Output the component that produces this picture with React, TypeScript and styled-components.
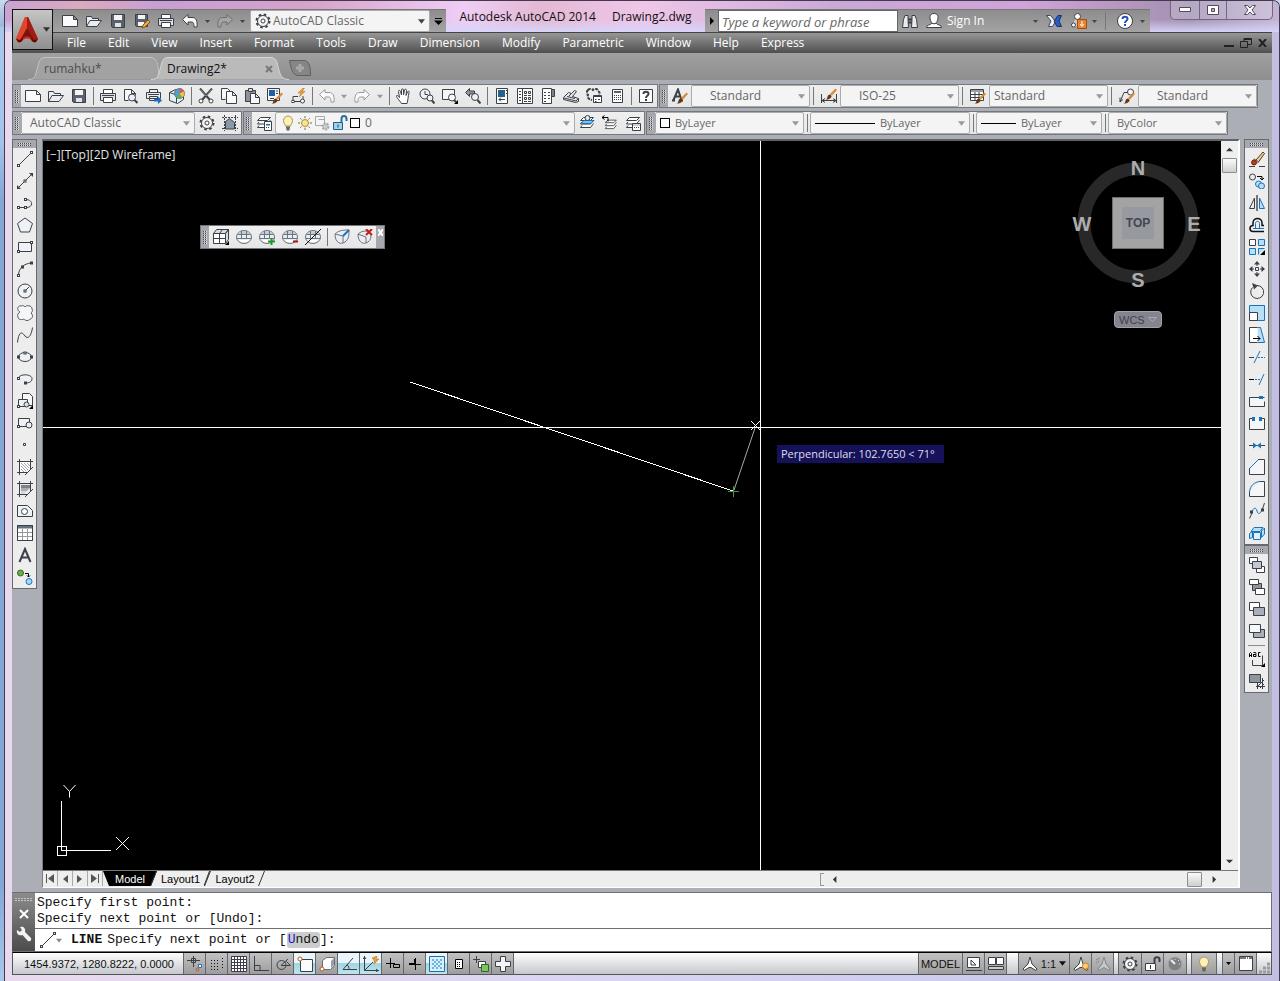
import React from 'react';
import styled, { createGlobalStyle } from 'styled-components';

const UI = '"Open Sans", "Noto Sans", sans-serif';
const INK = '#3b4048';
const BLUE = '#1a74bd';
const SKY = '#b9dff5';

const Global = createGlobalStyle`
  * { box-sizing: border-box; }
  body { margin: 0; font-family: ${UI}; font-size: 12px; line-height: 16px; color: #111; }
  button, input, select { font: inherit; color: inherit; margin: 0; padding: 0; border: 0; background: none; border-radius: 0; }
  a { color: inherit; text-decoration: none; }
`;

/* ---------- glyphs, drawn on a 16 x 16 grid ---------- */

const dot = (x: number, y: number) => <rect x={x - 1} y={y - 1} width="2" height="2" fill="#fff" />;
const brush = (
  <g stroke="none">
    <path d="M9 10l5.500-5.500 1.500 1.500-5 5.500z" fill="#d88a35" />
    <path d="M4.500 15.500c2 0 1.500-3 3-4.500s3 0 3 1.500-3 3.500-6 3z" fill="#6d3518" />
  </g>
);
const frameHash = <path d="M2.500 0v16M13.500 0v11M0 2.500h16M0 13.500h10M8 16l8-8" />;
const sphere = (
  <>
    <ellipse cx="8" cy="8" rx="7.500" ry="6.500" fill="#e9eef2" stroke="#6b737c" />
    <path d="M2 5h12c-1-2-3-3-6-3S3 3 2 5z" fill="#c3ccd4" stroke="none" />
    <path d="M1.500 5.500h13M.5 9.500h15" stroke="#6b737c" />
    <path d="M5.500 2v7M10.500 2v7" stroke="#6b737c" />
    <path d="M3 11c2 3 8 3 10 0z" fill="#fff" stroke="none" />
  </>
);
const layers = (
  <path d="M4.500 2.500h10l-3 3h-10zM3 7l-1.500 2h10l3-4M3 10.500l-1.500 2h10l3-4" fill="#fff" />
);

const glyphs: Record<string, React.ReactNode> = {
  new: <path d="M.5 2.500h11l4 4v7h-15zM11.500 2.500v4h4" fill="#fafafa" />,
  open: <path d="M.5 13.500v-10h5l1 2h6v2.500M.5 13.500l3.500-6h11.500l-4.500 6z" fill="#e9edf1" />,
  save: (
    <>
      <path d="M1.500 1.500h13v13h-12l-1-1z" fill="#5b626c" />
      <path d="M4 2h8v5H4z" fill="#f4f4f4" stroke="none" />
      <path d="M5 10h6v4H5z" fill="#dfe3e7" stroke="none" />
    </>
  ),
  saveas: (
    <>
      <path d="M1.500 1.500h12v12h-11l-1-1z" fill="#5b626c" />
      <path d="M4 2h7v4H4zM4 9h6v4H4z" fill="#f4f4f4" stroke="none" />
      <path d="M8 15l1-3 5-5 2 2-5 5z" fill="#f0a83a" stroke="#8a5a1b" />
    </>
  ),
  print: (
    <>
      <path d="M3.500 6V1.500h9V6" fill="#fff" />
      <path d="M.5 5.500h15v7H.5z" fill="#dcdfe3" />
      <path d="M3.500 9.500h9v5h-9z" fill="#fff" />
      <path d="M2 7.500h12" />
    </>
  ),
  preview: (
    <>
      <path d="M1.500 12.500v-11h7l4 4v2M1.500 12.500h4M8.500 1.500v4h4" fill="#fafafa" />
      <circle cx="9" cy="9.500" r="3.500" fill="#e8f0f6" />
      <path d="M11.500 12l3 3" strokeWidth="2" />
    </>
  ),
  publish: (
    <>
      <path d="M3.500 5V1.500h8V5M.5 4.500h14v6H.5zM3.500 8.500h8v4h-8z" fill="#eceef0" />
      <path d="M2 6.500h11" />
      <path d="M8 11h4V8.500l4 4-4 3.500v-2.500H8z" fill="#1b6fc0" stroke="none" />
    </>
  ),
  globe: (
    <>
      <path d="M.5 4.500l6-3 8 2v8l-6 4-8-3z" fill="#e4eef5" />
      <path d="M.5 4.500l7 2.500v8" />
      <circle cx="10.500" cy="5.500" r="5" fill="#4d9fd6" stroke="#6b7279" />
      <path d="M10.500 5.500v-5a5 5 0 014.500 3z" fill="#e2574c" stroke="none" />
      <path d="M10.500 5.500l4.500-2a5 5 0 01-2 6z" fill="#f0c23a" stroke="none" />
      <path d="M10.500 5.500l2.500 4.500a5 5 0 01-6-1z" fill="#5fae52" stroke="none" />
    </>
  ),
  cut: (
    <>
      <path d="M2 .5L12 12M14 .5L4 12" strokeWidth="2" />
      <path d="M2.500 1.500L8 8M13.500 1.500L8 8" stroke="#c9cdd2" strokeWidth=".5" />
      <circle cx="3" cy="13" r="2" fill="#fff" />
      <circle cx="13" cy="13" r="2" fill="#fff" />
    </>
  ),
  copy: <path d="M.5 11.500V.5h6l3 3M.5 11.500h4M5.500 3.500h6l4 4v8h-10zM11.500 3.500v4h4" fill="#fafafa" />,
  paste: (
    <>
      <path d="M1.500 2.500h10v11h-10z" fill="#8d939a" />
      <path d="M4.500.5h4v3h-4z" fill="#ddd" />
      <path d="M6.500 5.500h5l4 4v6h-9zM11.500 5.500v4h4" fill="#fafafa" />
    </>
  ),
  match: (
    <>
      <path d="M.5.5h12v12H.5z" fill="#f4f4f4" />
      <path d="M2 2h6v6H2z" fill="#1d62a8" stroke="none" />
      <path d="M9 3h2M9 5.500h2M3 10.500h4" />
      {brush}
    </>
  ),
  blockedit: (
    <>
      <path d="M3 13.500V8.500h5M3 13.500h8M13 12V8" />
      {dot(3, 13.500)}
      <circle cx="12.500" cy="13" r="2" fill="#fff" />
      <path d="M13 0l-5 5h3l-2 4 6-5.500h-3l2.500-3.500z" fill="#f0a030" stroke="#b66a15" strokeWidth=".5" />
    </>
  ),
  undo: <path d="M.5 6.500L6 1.500v3h4c4 0 5.500 3 5 9.500h-3c0-4-.5-5-3-5H6v3z" fill="#fbfbfb" />,
  redo: <path d="M15.500 6.500L10 1.500v3H6c-4 0-5.500 3-5 9.500h3c0-4 .5-5 3-5h3v3z" fill="#fbfbfb" />,
  hand: (
    <path
      d="M5.500 15.500C4 13 1 10 .5 8.500s1.500-1.500 3 1l-1-6c0-1.500 1.500-1.500 2 0l1 3.500V2c0-1.500 2-1.500 2 0v5l1-5c.5-1.500 2-1 2 .5l-.5 5 1.500-3.500c.5-1.500 2-1 1.500.5-1 4-1 8-2 11z"
      fill="#fff"
    />
  ),
  zoomrt: (
    <>
      <circle cx="6" cy="6" r="5" fill="#eef2f5" />
      <path d="M6 3v3.500h3" />
      <circle cx="11" cy="10" r="3" fill="#eef2f5" />
      <path d="M13 12.500l2.500 3" strokeWidth="2" />
    </>
  ),
  zoomwin: (
    <>
      <path d="M.5 1.500h12v10H.5z" fill="#f3f5f6" />
      <circle cx="10" cy="9.500" r="3.500" fill="#f4f7f9" />
      <path d="M12 12l2 2" strokeWidth="2" />
      <path d="M16 12v4h-4z" fill="#000" stroke="none" />
    </>
  ),
  zoomprev: (
    <>
      <path d="M.5 4.500l4-4v2.500h5v3h-5v2.500z" fill="#8d939a" />
      <circle cx="10" cy="9" r="3.500" fill="#eef2f5" />
      <path d="M12.500 12l3 3.500" strokeWidth="2" />
    </>
  ),
  props: (
    <>
      <path d="M2.500.5h11v15h-11z" fill="#fff" />
      <path d="M4 2h7v7H4z" fill="#27618f" stroke="none" />
      <path d="M12 2.500h1M12 5.500h1M5 11.500h6M7 9.500l-2 2 2 2" />
    </>
  ),
  center: (
    <>
      <path d="M.5.5h15v15H.5zM5.500.5v15" fill="#fff" />
      <path d="M2 3.500h2M2 6.500h2M2 9.500h2M2 12.500h2" />
      <path d="M7.500 3.500h2v2h-2zM11.500 3.500h2v2h-2zM7.500 9.500h2v2h-2zM11.500 9.500h2v2h-2z" />
      <path d="M7 7.500h3M11 7.500h3M7 13.500h3M11 13.500h3" />
    </>
  ),
  palettes: (
    <>
      <path d="M2.500.5h9v15h-9z" fill="#fff" />
      <path d="M11.500 1.500h3v7h-3z" fill="#7b828a" />
      <path d="M4 4.500h2M8 4.500h2M4 7.500h2M8 7.500h2M4 10.500h2M8 10.500h2M4 13.500h2" />
    </>
  ),
  sheet: (
    <>
      <path d="M.5 9.500l5-5 3 1 3-3 2 1-4 5 6 2v3l-3 1-12-3z" fill="#e2e6ea" />
      <path d="M1 10l12 3 2.500-2.500M4 8.500l8 2M8.500 5.500l-3 3" />
    </>
  ),
  markup: (
    <>
      <path d="M2 2c2-2 4-1 5 0 2-2 5-1 5 1 2 1 2 3 1 4M2 2C0 4 1 6 2 7c-1 2 0 4 4 5" strokeDasharray="3 1" strokeWidth="2" />
      <path d="M7.500 7.500h8v7h-8z" fill="#fff" />
      <path d="M7.500 8.500h8M9 11.500h1.500M12 11.500h2M9 13.500h1.500" />
    </>
  ),
  calc: (
    <>
      <path d="M3.500 1.500h10v13h-10z" fill="#fff" />
      <path d="M5 3h7v2H5z" fill="#5b626c" stroke="none" />
      <path d="M5 7.500h7M5 9.500h7M5 11.500h7" strokeDasharray="1 1" />
    </>
  ),
  help: (
    <>
      <path d="M1.500 1.500h13v13h-13z" fill="#fff" />
      <path d="M5.500 6c0-3 5-3 5 0 0 2-2.500 1.500-2.500 4M8 11v2" strokeWidth="2" />
    </>
  ),
  textstyle: (
    <>
      <path d="M0 12.500h3M7 12.500h4M1.500 12L6 1.500 9.500 12M3 8.500h6" strokeWidth="2" />
      {brush}
    </>
  ),
  dimstyle: (
    <>
      <path d="M.5 6v9M15.500 6v9M.5 12.500h15M1 12.500l3-2M1 12.500l3 2M15 12.500l-3-2M15 12.500l-3 2" />
      <g transform="translate(0 -4)">{brush}</g>
    </>
  ),
  tablestyle: (
    <>
      <path d="M.5 1.500h13v11H.5z" fill="#fff" />
      <path d="M.5 3h13M.5 6.500h13M.5 9.500h13M5 4v8M9 4v8" />
      {brush}
    </>
  ),
  leaderstyle: (
    <>
      <path d="M1 14l4-9.500h4M1 14V9.500M1 14l3-2.500" />
      <circle cx="11.500" cy="4" r="3" fill="#f7f7f7" />
      {brush}
    </>
  ),
  gear: (
    <>
      <circle cx="8" cy="8" r="6.500" strokeWidth="2" strokeDasharray="2.550 2.550" />
      <circle cx="8" cy="8" r="5.500" fill="#f4f4f4" />
      <circle cx="8" cy="8" r="2" fill="#fff" />
    </>
  ),
  wssave: (
    <>
      <path d="M2.500 0v16M13.500 0v16M0 2.500h16M0 13.500h16" strokeDasharray="2 1" />
      <path d="M3.500 14V6.500l4-3 5 4V14z" fill="#8b98a5" />
    </>
  ),
  layerprops: (
    <>
      {layers}
      <path d="M8.500 6.500h7v9h-7z" fill="#fff" />
      <path d="M10 9h4v1.500h-4z" fill="#1b6fc0" stroke="none" />
      <path d="M10 12.500h4" strokeDasharray="1 1" />
    </>
  ),
  bulb: (
    <>
      <path d="M5.500 11C5 9 3.500 8 3.500 5.500a4.500 4.500 0 019 0C12.500 8 11 9 10.500 11z" fill="#fdf0b4" stroke="#a8935a" />
      <path d="M6 12.500h4M6.500 14.500h3" strokeWidth="2" stroke="#666" />
    </>
  ),
  sun: (
    <>
      <circle cx="8" cy="8" r="4" fill="#fbe489" stroke="#9b8030" />
      <path d="M8 0v2.500M8 13.500V16M0 8h2.500M13.500 8H16M2.500 2.500L4 4M12 12l1.500 1.500M13.500 2.500L12 4M2.500 13.500L4 12" stroke="#6d5a26" />
    </>
  ),
  freeze: (
    <g stroke="#a3a8ad">
      <path d="M1.500 1.500h9v9h-9zM4.500 4.500h6v6" fill="#f5f5f5" />
      <circle cx="11.500" cy="11.500" r="3" fill="#ccc" strokeWidth="2" strokeDasharray="2 1" />
    </g>
  ),
  lock: (
    <>
      <path d="M9.500 7V4c0-4 5-4 5 0v2" strokeWidth="2" stroke="#2d6f9c" />
      <path d="M1.500 7.500h9v7h-9z" fill="#9fd4ef" stroke="#1e5f8c" />
      <path d="M6 9.500v3" stroke="#1e3f5c" />
    </>
  ),
  layercur: (
    <>
      <g stroke={INK}>{layers}</g>
      <path d="M2 8.500l3-3h10l-3 3z" fill="#7cc4ea" stroke={BLUE} />
      <circle cx="8.500" cy="3" r="2.500" fill="#dfeef7" />
    </>
  ),
  layerprev: (
    <>
      <g transform="translate(2 3) scale(.85)">{layers}</g>
      <path d="M0 2.500h6v4M0 2.500l2.500-2M0 2.500l2.500 2" stroke="#000" />
    </>
  ),
  layerstate: (
    <>
      {layers}
      <path d="M7.500 8.500h8v7h-8z" fill="#fff" />
      <path d="M7.500 10h8M9 12.500h5" strokeDasharray="1 1" />
    </>
  ),
  line: <><path d="M1.500 14.500l13-13" />{dot(1.500, 14.500)}{dot(14.500, 1.500)}</>,
  xline: (
    <>
      <path d="M1 15L15 1" />
      <path d="M0 16v-4l4 4zM16 0v4l-4-4z" fill={INK} stroke="none" />
      {dot(8, 8)}
    </>
  ),
  pline: <><path d="M1.500 12.500h8c7 0 7-8-1-8" />{dot(1.500, 12.500)}{dot(8.500, 12.500)}{dot(8.500, 4.500)}</>,
  polygon: <path d="M8 1l7.500 5.500-3 8.500h-9l-3-8.500z" fill="#eef2f5" />,
  rect: <><path d="M1.500 3.500h13v9h-13z" fill="#eef2f5" />{dot(1.500, 12.500)}{dot(14.500, 3.500)}</>,
  arc: <><path d="M1.500 14.500c0-7 5-12 13-12.500" />{dot(1.500, 14.500)}{dot(5.500, 6)}{dot(14.500, 2)}</>,
  circle: <><circle cx="8" cy="8" r="7" fill="#eef2f5" /><path d="M8 8l4-4" />{dot(8, 8)}</>,
  cloud: (
    <path
      d="M3 7C-1 5 1 0 4 1c2-1 3 0 4 1 1-2 7-2 7 2 1 2 0 3-1 4 3 3 1 6-1 6-1 2-5 2-6 0-2 1-6 1-6-2-1-2 0-4 2-5z"
      fill="#f4f6f8"
      stroke="#555b63"
    />
  ),
  spline: <path d="M.5 15.500C2 2 6 6 8 9s6 2 7.500-8.500" />,
  ellipse: <><ellipse cx="8" cy="8" rx="6.500" ry="4.500" fill="#eef2f5" />{dot(1.500, 8)}{dot(14.500, 8)}{dot(8, 4)}</>,
  elarc: <><path d="M1.500 7.500c0-5 14-5 13.500.5 0 3-4 4-6 4" fill="#eef2f5" />{dot(1.500, 7.500)}{dot(8.500, 12)}</>,
  insert: (
    <>
      <path d="M5.500.5h7l3 3v9h-10z" fill="#f7f7f7" />
      <path d="M1.500 6.500h9v7h-9z" fill="#eef2f5" />
      <circle cx="9.500" cy="11.500" r="2.500" fill="#ddd" />
      {dot(1.500, 13.500)}
      <path d="M16 12v4h-4z" fill="#000" stroke="none" />
    </>
  ),
  block: <><path d="M1.500 3.500h11v8h-11z" fill="#eef2f5" /><circle cx="12" cy="10" r="3" fill="#eee" />{dot(1.500, 11.500)}</>,
  point: <path d="M6.500 6.500h2v2h-2z" fill="#fff" />,
  hatch: (
    <>
      <path d="M3 3h10v5l-5 5H3z" fill="#fff" stroke="none" />
      {frameHash}
      <path d="M4 4l7 7M4 7l5 5M7 4l5 5M4 10l3 3M10 4l3 3" stroke="#777" strokeWidth=".700" />
    </>
  ),
  gradient: (
    <>
      {frameHash}
      <path d="M4 4h9v3H4z" fill="#7b828a" stroke="none" />
      <path d="M4 7h9l-3 3H4z" fill="#a8aeb4" stroke="none" />
      <path d="M4 10h6l-3 3H4z" fill="#d6dade" stroke="none" />
    </>
  ),
  region: <><path d="M.5 2.500h10l5 5v6H.5z" fill="#eef2f5" /><circle cx="7.500" cy="8.500" r="3" fill="#fff" /></>,
  table: (
    <>
      <path d="M.5.5h15v15H.5z" fill="#fff" />
      <path d="M.5 2h15" strokeWidth="3" stroke="#5f7480" />
      <path d="M1 7.500h14M1 11.500h14M5.500 4v11M10.500 4v11" stroke="#999" />
      <path d="M.5.5h15v15H.5z" />
    </>
  ),
  mtext: <path d="M2.500 15L8 2l5.500 13M4.500 10.500h7" strokeWidth="2" />,
  addsel: (
    <>
      <circle cx="3.500" cy="4" r="3" fill="#6cab45" stroke="#336b1c" />
      <circle cx="12" cy="12.500" r="3" fill="#a4d8f5" stroke={BLUE} />
      <path d="M8 4.500h3.500V8M10 6.500l1.500 1.500L13 6.500" stroke="#000" />
    </>
  ),
  erase: (
    <>
      <path d="M0 15.500h6M10 15.500h6" />
      <path d="M7 9l7-8 1.500 1.500-6 8.500z" fill="#f3cf8f" stroke="#4a3a2a" />
      <path d="M5.500 8l4 3-1 1-4-3.500z" fill="#fff" stroke="#666" />
      <circle cx="5" cy="11.500" r="2.500" fill="#b3391f" stroke="#7a2614" />
    </>
  ),
  copyobj: (
    <>
      <circle cx="3.500" cy="4" r="3" />
      <path d="M8 3.500h5V7M11 5l2 2 2-2" stroke="#000" />
      <g stroke={BLUE}><circle cx="9.500" cy="11" r="3" fill={SKY} /><circle cx="12.500" cy="13" r="3" fill={SKY} /></g>
    </>
  ),
  mirror: (
    <>
      <path d="M5.500 3v10.500H.5z" />
      <path d="M8 0v16" stroke="#000" />
      <path d="M10.500 3v10.500h5z" fill={SKY} stroke={BLUE} />
    </>
  ),
  offset: (
    <>
      <path d="M15 11.500H4M6.500 11V6.500c0-3 4-3 4 0v5" stroke={BLUE} />
      <path d="M15 8.500h-2V6c0-6-9-6-9 0v2.500c-4 0-4 6 0 6h11" stroke="#111" strokeWidth="1.500" />
    </>
  ),
  array: (
    <>
      <path d="M.5.5h6v6h-6z" fill="#fff" />
      <path d="M9.500.5h6v6h-6zM.5 9.500h6v6h-6zM9.500 15.500v-6h6" fill={SKY} stroke={BLUE} />
      <path d="M16 11v5h-5z" fill="#000" stroke="none" />
    </>
  ),
  move: (
    <>
      <path d="M8 1v4M8 11v4M1 8h4M11 8h4M6.500 6.500h3v3h-3z" />
      <path d="M8 0l3 3.500H5zM8 16l3-3.500H5zM0 8l3.500-3v6zM16 8l-3.500-3v6z" fill={INK} stroke="none" />
    </>
  ),
  rotate: <><path d="M8 2.500a6.500 6.500 0 11-4.500 2" /><path d="M3 0l6 2.500-4 4z" fill={INK} stroke="none" /></>,
  scale: <><path d="M.5.5h15v15H.5z" fill={SKY} stroke={BLUE} /><path d="M.5 7.500h8v8h-8z" fill="#fff" /></>,
  stretch: (
    <>
      <path d="M8.500.5h3l4 15h-7" fill={SKY} stroke={BLUE} />
      <path d="M8.500 15.500h-8V.5h8" fill="#fff" />
      <path d="M4 11.500h7M8.500 9l2.500 2.500L8.500 14" stroke="#000" />
    </>
  ),
  trim: <><path d="M0 8.500h5" /><path d="M5 14l6-12" stroke={BLUE} /><path d="M9 8.500h7" stroke={BLUE} strokeDasharray="2 1" /></>,
  extend: <><path d="M0 8.500h5" stroke="#000" /><path d="M6 8.500h5" stroke={BLUE} strokeDasharray="2 1" /><path d="M10 14l5-11" stroke={BLUE} /></>,
  breakpt: <><path d="M12 4.500H.5v9h15v-5M15.500 4.500H12" fill="#f4f6f8" /><path d="M10 3h4v3h-4z" fill={BLUE} stroke="none" /></>,
  breakit: <><path d="M3 3.500H.5v11h15v-11H13" fill="#f4f6f8" /><path d="M3 2h3v4H3zM10 2h3v4h-3z" fill={BLUE} stroke="none" /></>,
  join: <><path d="M0 8.500h16" /><path d="M4 5.500l4 3-4 3zM12 5.500l-4 3 4 3z" fill={BLUE} stroke="none" /></>,
  chamfer: <><path d="M9 .5h6.500v15H.5V9" fill="#f4f6f8" /><path d="M.5 9.500l9-9" stroke={BLUE} /></>,
  fillet: <><path d="M11 .5h4.500v15H.5V11" fill="#f4f6f8" /><path d="M.5 11C1 5 5 1 11 .5" stroke={BLUE} /></>,
  blend: <><path d="M3 10c1-6 4-6 5-2s4 3 5-2" stroke={BLUE} /><path d="M.5 15.500L3 10M13.500 6l2-6" />{dot(2.500, 9)}{dot(13.500, 7)}</>,
  explode: (
    <>
      <path d="M2 6.500l3-4h9l-3 4zM12.500 6l3-3v6l-3 3.500zM.5 8.500l3-2v6l-3 1z" fill={SKY} stroke={BLUE} />
      <path d="M4.500 7.500h7v7h-7z" fill="#dff1fb" stroke={BLUE} />
    </>
  ),
  front: (
    <>
      <path d="M.5.5h8v6h-8zM7.500 9.500h8v6h-8z" fill="#fff" />
      <path d="M3.500 4.500h9v7h-9z" fill="#c3c8ce" />
    </>
  ),
  back: (
    <>
      <path d="M3.500 4.500h9v7h-9z" fill="#8f969e" />
      <path d="M.5.5h9v5h-9zM6.500 9.500h9v6h-9z" fill="#fff" />
    </>
  ),
  above: <><path d="M.5 1.500h10v8H.5z" fill="#fff" /><path d="M4.500 6.500h11v8h-11z" fill="#a9afb6" /></>,
  under: <><path d="M4.500 6.500h11v8h-11z" fill="#a9afb6" /><path d="M.5 1.500h11v8H.5z" fill="#f7f8f9" /></>,
  abc: (
    <>
      <path d="M.5 6V2.500l1-1 1 1V6M.5 4.500h2M4.500 1.500h2l.5 1-.5 1h-2M4.500 3.500H7v2H4.500zM11.500 1.500h-2v4h2" stroke="#000" />
      <path d="M3.500 9v5.500h10v-10" />
      <path d="M16 12v4h-4z" fill="#000" stroke="none" />
    </>
  ),
  hatchback: (
    <>
      <path d="M7 13.500h9M8.500 9v7M13.500 5v11M9 13l6-6M11 15l4-4" />
      <path d="M.5 1.500h11v8H.5z" fill="#8f969e" />
    </>
  ),
  box3d: (
    <>
      <path d="M.5 4.500l3-4h12l-3 4zM12.500 4.500l3-4v10l-3 4z" fill="#d6dce1" />
      <path d="M.5 4.500h12v10H.5zM.5 9.500h12M6.500 4.500v10M6.500 4.500l3-4" fill="#fff" />
      <path d="M16 12v4h-4z" fill="#000" stroke="none" />
    </>
  ),
  sph: sphere,
  sphadd: <>{sphere}<path d="M12.500 9v7M9 12.500h7" strokeWidth="2" stroke="#1c9a2a" /></>,
  sphsub: <>{sphere}<path d="M11 12.500h5" strokeWidth="2" stroke="#a01818" /></>,
  sphcut: <>{sphere}<path d="M0 16L16 0" stroke="#111" /></>,
  solid: (
    <>
      <path d="M1 5c4-4 9-4 14-4 0 5 0 9-4 12-4 3-10 1-10-8z" fill="#e9eef2" stroke="#6b737c" />
      <path d="M1 5l8 2v7" stroke="#6b737c" />
      <path d="M9 7l6-6" strokeWidth="2" stroke={BLUE} />
    </>
  ),
  solidx: (
    <>
      <path d="M1 5c2-2 5-3 8-3 5 1 7 7 2 11-4 3-10 1-10-8zM1 5l8 3v6" fill="#e9eef2" stroke="#6b737c" />
      <path d="M9 0l6 6M15 0L9 6" strokeWidth="2" stroke="#c61c1c" />
    </>
  ),
  infer: (
    <>
      <path d="M6.500 0v11M0 4.500h13M4.500 2.500h4v4h-4z" />
      <path d="M11.500 8.500h3v3h-3z" stroke={BLUE} fill="#fff" />
      <circle cx="10.500" cy="13.500" r="1.500" stroke="#c4571b" />
    </>
  ),
  snap: <path d="M2 4.500h9M2 7.500h9M2 10.500h9M2 13.500h9M13.500 2v12" strokeDasharray="1 2" stroke="#111" />,
  grid: <><path d="M.5.5h15v15H.5z" fill="#fff" /><path d="M3.500 0v16M6.500 0v16M9.500 0v16M12.500 0v16M0 3.500h16M0 6.500h16M0 9.500h16M0 12.500h16" /></>,
  ortho: <path d="M1.500 0v14.500H16M2 9.500h5v5" />,
  polar: <><circle cx="6.500" cy="9" r="4.500" /><path d="M6 9.500L13 3M6 9.500h9.500l-4-4" /></>,
  osnap: <><path d="M3.500 3.500h12v12h-12z" fill="#f9fbfc" /><circle cx="3" cy="3" r="2" fill="#fff" stroke="#c4571b" /></>,
  osnap3: (
    <>
      <path d="M3.500 4.500l4-3h8v8l-4 4h-8z" fill="#fff" stroke="#666c74" />
      <path d="M12 5l3-3v7l-3 3z" fill="#9aa0a7" stroke="none" />
      <circle cx="3" cy="13" r="2" fill="#fff" stroke="#c4571b" />
    </>
  ),
  otrack: <path d="M12 2L2 13.500h14M6 9c2 1 2 3 2 4.500" />,
  ducs: (
    <>
      <path d="M1.500 0v14.500H16M2 14L10 6M0 3l1.500-2L3 3M13 13l2 1.500L13 16" />
      <path d="M9 2l5-2-1 3h3l-5 5v-4z" fill="#f0a030" stroke="#a86414" strokeWidth=".5" />
    </>
  ),
  dyn: <path d="M5.500 2v10M1 7.500h9M8.500 8.500h6v3h-6z" stroke="#000" />,
  lwt: <><path d="M8.500 2v12" stroke="#000" /><path d="M2 8h7M8 3v5" strokeWidth="2" stroke="#000" /><path d="M9 8.500h5" stroke="#000" /></>,
  tpy: (
    <>
      <path d="M.5.5h15v15H.5z" fill="#d9effc" stroke="#1f6ea8" />
      <path d="M3 4h10M3 8h10M3 12h10" strokeWidth="2" stroke="#6fb2dd" strokeDasharray="2 2" />
      <path d="M5 6h8M5 10h8" strokeWidth="2" stroke="#6fb2dd" strokeDasharray="2 2" />
    </>
  ),
  qp: <><path d="M4.500 3.500h7v9h-7z" fill="#fff" stroke="#000" /><path d="M6 6.500h4M6 8.500h4M6 10.500h4" stroke="#000" strokeDasharray="1 1" /></>,
  sc: (
    <>
      <path d="M3.500 0v7M0 3.500h7" />
      <path d="M5.500 5.500h7v6h-7z" fill="#fff" />
      <path d="M8.500 8.500h7v7h-7z" fill="#83c06a" stroke="#2c6b1d" />
    </>
  ),
  plus: <path d="M5.500.5h5v5h5v5h-5v5h-5v-5h-5v-5h5z" fill="#f2f4f6" />,
  modelspace: <><path d="M1.500 1.500h12v10h-12z" fill="#fff" /><path d="M5 4v5h5zM0 14.500h16" /></>,
  layouts: <><path d="M.5 1.500h7v7h-7zM8.500 1.500h7v7h-7z" fill="#fff" /><path d="M.5 10.500h15v3H.5z" fill="#ccc" /></>,
  anno: <path d="M8 1l2 7 5 5-1 1.500-5-3H7l-5 3L1 13l5-5z" fill="#fff" />,
  annovis: (
    <>
      <path d="M8 1l2 7 5 5-1 1.500-5-3H7l-5 3L1 13l5-5z" fill="#fff" />
      <circle cx="12.500" cy="10" r="3" fill="#fbd267" stroke="#e07b16" />
    </>
  ),
  annoauto: <path d="M9 1l2 7 4 5-1 1.500-5-3-5 3L3 13l4-5zM1 4l4-2M1 7l3-2" fill="#c6c8ca" stroke="#84888c" />,
  padlock: (
    <>
      <path d="M9.500 7V3.500c0-3 5-3 5 0V6" strokeWidth="2" />
      <path d="M.5 7.500h10v7H.5z" fill="#fff" />
      <path d="M5.500 9v4" />
    </>
  ),
  hardware: (
    <>
      <circle cx="8" cy="8" r="7" fill="#7d8084" stroke="#a9abad" />
      <path d="M8 8L4 4" stroke="#eee" strokeWidth="2" />
      <path d="M8 3v1M11 4l1 1M12 8h1" stroke="#ddd" />
    </>
  ),
  clean: (
    <>
      <path d="M1.500.5h13v14h-13z" fill="#fff" />
      <path d="M2 2h12" strokeWidth="2" strokeDasharray="6 1 1 1" stroke="#777" />
    </>
  ),
  binoc: (
    <>
      <path d="M3 2.500h3v4l.5 8h-6l1-8zM10 2.500h3l1.500 4 1 8h-6l.5-8z" fill="#e8eaec" />
      <path d="M6 6.500h4M6 9.500h4" strokeWidth="2" />
    </>
  ),
  user: (
    <>
      <path d="M.5 14.500c0-3 3.500-2 5-4h5c1.500 2 5 1 5 4z" fill="#fff" />
      <path d="M8 .5c5 0 4.500 5 3 8-1.500 3-4.500 3-6 0-1.500-3-2-8 3-8z" fill="#fff" />
    </>
  ),
  exchange: (
    <>
      <path d="M.5 2.500h4l5 6-3 5h-4l2.500-5.500z" fill="#f2f2f2" stroke="#3e4a66" />
      <path d="M15.500 2.500H12L8 8l3 5.500h4.500L13 8z" fill="#2b5cc4" stroke="#1a2f6d" />
    </>
  ),
  share: (
    <>
      <path d="M6 6L3 12h7M6 6l4 6" strokeWidth="3" stroke="#c9cdd2" />
      <circle cx="6.500" cy="3.500" r="3" fill="#fff" />
      <circle cx="2.500" cy="12" r="2" fill="#fff" />
      <path d="M6.500 6.500h9v9h-9z" fill="#e8822b" stroke="#a34e0c" />
      <path d="M11 8v5M9 11l2 2.500 2-2.500" stroke="#fff" />
    </>
  ),
  question: (
    <>
      <circle cx="8" cy="8" r="7.500" fill="#fff" />
      <path d="M5.500 6c0-3 5-3 5 0 0 2-2.500 1.500-2.500 4M8 11v2" strokeWidth="2" stroke="#2250b8" />
    </>
  ),
  wrench: (
    <path
      d="M1 4l3 2 2-2-2-3c3-1 6 1 5 5l6 6c1 2-1 4-3 3L6.500 9C3 10 0 8 1 4z"
      fill="#f4f4f4"
      stroke="none"
    />
  ),
};

const Svg = styled.svg<{ $tone?: string }>`
  display: block;
  flex: none;
  fill: none;
  stroke: ${(p) => p.$tone || INK};
`;

function Icon({ name, tone, size = 16 }: { name: string; tone?: string; size?: number }) {
  return (
    <Svg viewBox="0 0 16 16" width={size} height={size} $tone={tone} aria-hidden="true">
      {glyphs[name]}
    </Svg>
  );
}

function Caret({ color = '#444', w = 8 }: { color?: string; w?: number }) {
  return (
    <Svg viewBox="0 0 8 5" width={w} height={5} aria-hidden="true">
      <path d="M0 0h8L4 5z" fill={color} stroke="none" />
    </Svg>
  );
}

/* ---------- window frame ---------- */

const Desktop = styled.div`
  min-height: 100vh;
  display: flex;
  padding-left: 4px;
  background: linear-gradient(#c9d8ee 0, #9db6dc 26px, #a9c8ec 27px, #a5c4ea 140px, #84a7d6 200px, #84a7d6 90%, #a9c8ec);
`;

const Window = styled.div`
  flex: 1;
  min-width: 0;
  display: flex;
  flex-direction: column;
  padding: 0 7px 6px 7px;
  border: 1px solid #42394f;
  border-bottom: 0;
  border-radius: 7px 7px 0 0;
  background: linear-gradient(90deg, #e9d9ee 0, #dcd6f2 40%, #cfcdf0 70%, #c2bfe2 100%);
`;

const Top = styled.header`
  position: relative;
`;

const TitleBar = styled.div`
  display: flex;
  align-items: flex-start;
  height: 31px;
  padding: 8px 0 0 47px;
  margin: 0 -7px;
  border-radius: 6px 6px 0 0;
  background: linear-gradient(transparent 60%, #d6d6faee), linear-gradient(90deg, #c9a3d2 0, #dca9bd 6%, #c79fd3 12%, #d7a2cb 24%, #efcdf5 36%, #e3b9d4 42%, #eec6e8 50%, #c9a7d6 66%, #cfa4d8 80%, #b696bd 88%, #a292b4 93%, #c4b4d4 100%);
`;

const AppButton = styled.button`
  position: absolute;
  left: 0;
  top: 8px;
  z-index: 2;
  width: 41px;
  height: 41px;
  display: flex;
  align-items: center;
  justify-content: center;
  gap: 4px;
  border: 1px solid #111;
  background: linear-gradient(#c6c6c6, #8f8f8f);
`;

const Strip = styled.div`
  display: flex;
  align-items: center;
  flex: none;
  height: 23px;
  background: linear-gradient(#8d8d8d, #a3a3a3);
  border-top: 1px solid #777;
`;

const IconButton = styled.button<{ $w?: number; $h?: number }>`
  width: ${(p) => p.$w || 23}px;
  height: ${(p) => p.$h || 22}px;
  flex: none;
  display: flex;
  align-items: center;
  justify-content: center;
`;

const Quick = styled.div`
  display: flex;
  gap: 1px;
  padding-left: 6px;
  width: 198px;
`;

const Title = styled.h1`
  flex: 1;
  margin: 0;
  font-size: 12px;
  line-height: 16px;
  font-weight: 400;
  display: flex;
  justify-content: center;
  gap: 16px;
  white-space: nowrap;
`;

const Search = styled.input`
  width: 180px;
  height: 22px;
  padding: 2px 3px 0;
  background: #fff;
  border: 1px solid #666;
  font-style: italic;
  font-size: 13px;
  &::placeholder { color: #666; opacity: 1; }
`;

const InfoCenter = styled(Strip)`
  width: 252px;
  color: #fff;
`;

const SignIn = styled.button`
  display: flex;
  align-items: center;
  justify-content: space-between;
  width: 92px;
  padding-left: 1px;
`;

const WinButtons = styled.div`
  display: flex;
  margin: -8px 6px 0 20px;
  height: 19px;
  border: 1px solid #75667f;
  border-top: 0;
  border-radius: 0 0 5px 5px;
  background: #ffffff33;
`;

const WinButton = styled.button<{ $w: number }>`
  width: ${(p) => p.$w}px;
  display: flex;
  align-items: center;
  justify-content: center;
  & + & { border-left: 1px solid #75667f; }
`;

const MenuBar = styled.nav`
  display: flex;
  align-items: center;
  height: 21px;
  padding-left: 44px;
  border-top: 1px solid #444;
  background: linear-gradient(#979797, #4f4f4f);
  color: #fff;
`;

const MenuItem = styled.button`
  height: 20px;
  padding: 0 11px;
`;

const DocControls = styled.div`
  margin-left: auto;
  display: flex;
  padding-right: 1px;
`;

/* ---------- document tabs ---------- */

const TabStrip = styled.div`
  display: flex;
  align-items: flex-end;
  height: 27px;
  padding-left: 16px;
  background: linear-gradient(#a0a0a0, #8e8e8e);
`;

const DocTab = styled.button<{ $active?: boolean; $w: number }>`
  position: relative;
  width: ${(p) => p.$w}px;
  height: 23px;
  margin-right: -12px;
  padding: 0 16px;
  display: flex;
  align-items: center;
  justify-content: space-between;
  z-index: ${(p) => (p.$active ? 1 : 0)};
  color: ${(p) => (p.$active ? '#111' : '#4c4c4c')};
  & > svg:first-child { position: absolute; left: 0; top: 0; }
  & > span, & > svg + span + svg { position: relative; }
`;

/* ---------- toolbars ---------- */

const Dock = styled.div`
  display: flex;
  flex-direction: column;
  gap: 3px;
  padding: 4px 0;
  background: #abaeb4;
`;

const DockRow = styled.div`
  display: flex;
  gap: 1px;
`;

const Bar = styled.div`
  display: flex;
  align-items: center;
  flex: none;
  height: 24px;
  border: 1px solid #74777c;
  background: linear-gradient(#efefef, #e6e6e6);
`;

const Grip = styled.i<{ $across?: boolean }>`
  flex: none;
  width: ${(p) => (p.$across ? 'auto' : '8px')};
  height: ${(p) => (p.$across ? '8px' : '22px')};
  display: flex;
  align-items: center;
  justify-content: center;
  background: #a6a8ad;
  &::before {
    content: '';
    width: ${(p) => (p.$across ? '13px' : '4px')};
    height: ${(p) => (p.$across ? '4px' : '14px')};
    background: linear-gradient(#a6a8ad 1px, transparent 1px) 0 0 / 2px 2px, linear-gradient(90deg, #45484e 1px, #e4e4e4 1px) 0 0 / 2px 2px;
  }
`;

const ComboBox = styled.label<{ $w: number; $pad?: number; $small?: boolean }>`
  display: flex;
  align-items: center;
  gap: 2px;
  flex: none;
  width: ${(p) => p.$w}px;
  height: 22px;
  padding: 0 4px 0 ${(p) => p.$pad || 4}px;
  border: 1px solid #a9abae;
  border-radius: 2px;
  background: #f4f4f4;
  color: #666;
  font-size: ${(p) => (p.$small ? 11 : 12)}px;
  & > select { flex: 1; min-width: 0; appearance: none; outline: 0; height: 18px; }
`;

const Swatch = styled.i`
  width: 10px;
  height: 10px;
  margin-right: 3px;
  border: 1px solid #000;
  background: #fff;
`;

const Stroke = styled.i<{ $w: number }>`
  width: ${(p) => p.$w}px;
  height: 1px;
  margin-right: 3px;
  background: #000;
`;

function Combo(p: { label: string; value: string; w: number; pad?: number; caret?: string; small?: boolean; children?: React.ReactNode }) {
  return (
    <ComboBox $w={p.w} $pad={p.pad} $small={p.small}>
      {p.children}
      <select aria-label={p.label} defaultValue={p.value}>
        <option>{p.value}</option>
      </select>
      <Caret color={p.caret || '#999'} w={7} />
    </ComboBox>
  );
}

const Divider = styled.i<{ $w?: number }>`
  flex: none;
  width: ${(p) => p.$w || 6}px;
  height: 18px;
  background: linear-gradient(#74777c, #74777c) center / 1px 100% no-repeat;
`;

function Tools({ names, w, h }: { names: string; w?: number; h?: number }) {
  return (
    <>
      {names.split(' ').map((n, i) =>
        n === '|' ? <Divider key={i} /> : (
          <IconButton key={i} $w={w} $h={h} aria-label={n}><Icon name={n} /></IconButton>
        ),
      )}
    </>
  );
}

const SideBar = styled.div`
  width: 25px;
  flex: none;
  display: flex;
  flex-direction: column;
  align-items: stretch;
  border: 1px solid #66696e;
  background: #ededed;
`;

const SideRule = styled.i`
  height: 6px;
  margin: 0 3px;
  background: linear-gradient(#8b8d90, #8b8d90) center / 100% 1px no-repeat;
`;

/* ---------- drawing area ---------- */

const Workspace = styled.main`
  flex: 1;
  display: flex;
  background: #abaeb4;
  padding-bottom: 4px;
`;

const LeftDock = styled.div`
  width: 30px;
  flex: none;
`;

const RightDock = styled.div`
  width: 32px;
  flex: none;
  padding-left: 4px;
`;

const Viewport = styled.section`
  flex: 1;
  min-width: 0;
  display: grid;
  grid-template: 1fr 17px / 1fr 17px;
  border: solid #fff;
  border-width: 2px 2px 1px 1px;
  border-top-color: #5f6267;
  border-left-color: #7b7e83;
  background: #eee;
`;

const Canvas = styled.div`
  position: relative;
  overflow: hidden;
  background: #000;
`;

const Scene = styled.svg`
  position: absolute;
  inset: 0;
  width: 100%;
  height: 100%;
  fill: none;
  stroke: #fff;
`;

const ViewLabel = styled.button`
  position: absolute;
  left: 3px;
  top: 6px;
  color: #e4e4e4;
  font-size: 12px;
`;

const FloatBar = styled(Bar)`
  position: absolute;
  left: 157px;
  top: 84px;
`;

const FloatClose = styled.button`
  width: 8px;
  height: 22px;
  display: flex;
  justify-content: center;
  padding-top: 3px;
  background: #a6a8ad;
`;

const Tip = styled.div`
  position: absolute;
  left: 734px;
  top: 304px;
  padding: 1px 4px;
  width: 167px;
  height: 18px;
  white-space: nowrap;
  background: #16125a;
  color: #dedeea;
  font-size: 11px;
`;

const Ucs = styled.svg`
  position: absolute;
  left: 13px;
  bottom: 11px;
  fill: none;
  stroke: #fff;
`;

const Compass = styled.div`
  position: absolute;
  right: 13px;
  top: 10px;
  width: 140px;
  display: flex;
  flex-direction: column;
  align-items: center;
  gap: 16px;
`;

const CompassFace = styled.svg`
  font-family: "Liberation Sans", Arial, sans-serif;
  font-weight: 700;
  font-size: 20px;
  text-anchor: middle;
`;

const Wcs = styled.button`
  width: 48px;
  height: 17px;
  display: flex;
  align-items: center;
  justify-content: space-between;
  padding: 0 4px;
  border: 1px solid #a2a2ae;
  border-radius: 4px;
  background: #84848f;
  color: #42424a;
  font: 11px/14px "Liberation Sans", Arial, sans-serif;
`;

const VScroll = styled.div`
  display: flex;
  flex-direction: column;
  align-items: center;
  justify-content: space-between;
  padding: 5px 0 5px;
  background: #eee;
`;

const Thumb = styled.i`
  display: block;
  width: 15px;
  height: 15px;
  border: 1px solid #8d8d8d;
  border-radius: 1px;
  background: linear-gradient(#fafafa, #cfcfcf);
`;

const ScrollTop = styled.div`
  display: flex;
  flex-direction: column;
  align-items: center;
  gap: 5px;
`;

const SheetRow = styled.div`
  grid-column: 1 / -1;
  display: flex;
  align-items: flex-start;
  border-top: 1px solid #777;
  background: #eee;
  font: 11px/16px "Liberation Sans", Arial, sans-serif;
`;

const NavButton = styled.button`
  width: 15px;
  height: 15px;
  display: flex;
  align-items: center;
  justify-content: center;
  border-right: 1px solid #aaa;
`;

const SheetTab = styled.button<{ $w: number; $active?: boolean }>`
  position: relative;
  width: ${(p) => p.$w}px;
  height: 15px;
  margin-right: -7px;
  color: ${(p) => (p.$active ? '#fff' : '#000')};
  & > svg { position: absolute; left: 0; top: 0; }
  & > span { position: relative; }
`;

const HScroll = styled.div`
  display: flex;
  align-items: center;
  gap: 8px;
  width: 418px;
  height: 16px;
  margin-left: auto;
  & > :nth-child(3) { margin-left: auto; }
  & > :last-child { margin-right: 21px; }
`;

const Splitter = styled.i`
  width: 4px;
  height: 13px;
  border: 1px solid #999;
  border-right: 0;
`;

/* ---------- command line and status bar ---------- */

const Command = styled.section`
  display: flex;
  border: 1px solid #6d6f74;
  border-left: 0;
  background: #fff;
  font: 13px/16px "Liberation Mono", "Courier New", monospace;
`;

const CommandSide = styled.div`
  width: 23px;
  flex: none;
  display: flex;
  flex-direction: column;
  align-items: center;
  gap: 7px;
  padding-top: 4px;
  background: linear-gradient(#8b8b8b, #4c4c4c);
`;

const CommandDots = styled.i`
  width: 17px;
  height: 5px;
  background: linear-gradient(#858585 1px, transparent 1px) 0 0 / 3px 2px, linear-gradient(90deg, #c4c4c4 2px, #858585 2px) 0 0 / 3px 2px;
`;

const CommandBody = styled.div`
  flex: 1;
  padding-top: 2px;
  & > p { margin: 0; padding-left: 2px; white-space: pre; }
`;

const Prompt = styled.label`
  display: flex;
  align-items: center;
  height: 23px;
  margin-top: 1px;
  padding-left: 5px;
  border-top: 1px solid #6d6f74;
  white-space: pre;
  & > b { margin: 0 5px 0 9px; }
  & > input { flex: 1; min-width: 0; outline: 0; }
`;

const Keyword = styled.button`
  padding: 0 1px;
  border-radius: 3px;
  background: #ccc;
  & > span { color: #1a1ac8; }
`;

const Status = styled.footer`
  display: flex;
  height: 23px;
  border: 1px solid #555;
  border-top-color: #000;
  background: linear-gradient(#fdfdfd, #c5c8cd);
  font: 11px/20px "Liberation Sans", Arial, sans-serif;
`;

const Coords = styled.output`
  width: 171px;
  padding-left: 11px;
  line-height: 22px;
  border-right: 1px solid #666;
`;

const Toggle = styled.button<{ $on?: boolean; $w?: number }>`
  width: ${(p) => p.$w || 22}px;
  height: 21px;
  flex: none;
  display: flex;
  align-items: center;
  justify-content: center;
  gap: 3px;
  border-right: 1px solid #63666b;
  background: ${(p) => (p.$on ? 'linear-gradient(#e8f6fb 45%, #a3d4e2 50%, #bfe4ee)' : 'linear-gradient(#c2c2c2, #9d9d9d)')};
`;

const StatusGap = styled.i<{ $w: number; $pushed?: boolean }>`
  width: ${(p) => p.$w}px;
  margin-left: ${(p) => (p.$pushed ? 'auto' : '0')};
  border-right: 1px solid #63666b;
`;

const SizeGrip = styled.i`
  width: 14px;
  display: flex;
  align-items: flex-end;
  justify-content: flex-end;
`;

const MENUS = ['File', 'Edit', 'View', 'Insert', 'Format', 'Tools', 'Draw', 'Dimension', 'Modify', 'Parametric', 'Window', 'Help', 'Express'];
const DRAW = 'line xline pline polygon rect arc circle cloud spline ellipse elarc insert block point hatch gradient region table mtext addsel';
const MODIFY = 'erase copyobj mirror offset array move rotate scale stretch trim extend breakpt breakit join chamfer fillet blend explode';
const TOGGLES = ['infer', 'snap', 'grid', 'ortho', 'polar', 'osnap', 'osnap3', 'otrack', 'ducs', 'dyn', 'lwt', 'tpy', 'qp', 'sc', 'plus'];
const ACTIVE = ['osnap', 'otrack', 'ducs', 'tpy'];

const Tri = ({ d, color = '#333', size = 8 }: { d: string; color?: string; size?: number }) => (
  <Svg width={size} height={size} viewBox="0 0 8 8" aria-hidden="true"><path d={d} fill={color} stroke="none" /></Svg>
);

function Header() {
  return (
    <Top>
      <AppButton aria-label="Application menu">
        <Svg width="24" height="27" viewBox="0 0 24 27" aria-hidden="true">
          <g stroke="none">
            <path d="M10 1h3l10 22-2 3c-2 1-4 0-5-2-2-2-6-2-8 0-1 2-3 3-5 2l-2-3z" fill="#c62a1c" />
            <path d="M10 1h2v14l-7 9-4-1z" fill="#e2442c" />
            <path d="M12 1h1l10 22-4 1-7-9z" fill="#a31c13" />
            <path d="M12 12l7 12c-2 0-3-2-4-3-2-1-4-1-6 0-1 1-2 3-4 3z" fill="#7c120d" />
            <path d="M1 23l4 1 3-2c0 3-3 5-5 4zM23 23l-4 1-3-2c0 3 3 5 5 4z" fill="#5e0c08" />
          </g>
        </Svg>
        <Caret color="#333" w={7} />
      </AppButton>
      <TitleBar>
        <Strip>
          <Quick>
            {['new', 'open', 'save', 'saveas', 'print', 'undo'].map((n) => (
              <IconButton key={n} $w={23} aria-label={n}><Icon name={n} /></IconButton>
            ))}
            <IconButton $w={10} aria-label="undo list"><Caret w={5} /></IconButton>
            <IconButton $w={23} aria-label="redo"><svg width="16" height="16" viewBox="0 0 16 16" fill="none" stroke="#6f6f6f" aria-hidden="true"><path d="M15.500 6.500L10 1.500v3H6c-4 0-5.500 3-5 9.500h3c0-4 .5-5 3-5h3v3z" fill="#a6a6a6" /></svg></IconButton>
            <IconButton $w={10} aria-label="redo list"><Caret w={5} /></IconButton>
          </Quick>
          <Combo label="Workspace" value="AutoCAD Classic" w={180} caret="#444"><Icon name="gear" /></Combo>
          <IconButton $w={16} aria-label="Customize">
            <Svg width="9" height="9" viewBox="0 0 9 9"><path d="M1 1.500h7" stroke="#000" /><path d="M0 3.500h9L4.500 8z" fill="#000" stroke="none" /></Svg>
          </IconButton>
        </Strip>
        <Title><span>Autodesk AutoCAD 2014</span><span>Drawing2.dwg</span></Title>
        <Strip>
          <IconButton $w={13} aria-label="Collapse search"><Tri d="M2 0l4 4-4 4z" color="#000" /></IconButton>
          <Search aria-label="Search help" placeholder="Type a keyword or phrase" />
        </Strip>
        <InfoCenter>
          <IconButton aria-label="Find"><Icon name="binoc" /></IconButton>
          <IconButton $w={25} aria-label="Account"><Icon name="user" /></IconButton>
          <SignIn><span>Sign In</span><Caret w={5} /></SignIn>
          <IconButton $w={32} aria-label="Exchange"><Icon name="exchange" /></IconButton>
          <IconButton $w={17} aria-label="Share"><Icon name="share" /></IconButton>
          <IconButton $w={14} aria-label="Share options"><Caret w={5} /></IconButton>
          <Divider $w={9} />
          <IconButton $w={29} aria-label="Help"><Icon name="question" /></IconButton>
          <IconButton $w={7} aria-label="Help options"><Caret w={5} /></IconButton>
        </InfoCenter>
        <WinButtons>
          <WinButton $w={28} aria-label="Minimize"><Svg width="12" height="6" $tone="#534a5e"><path d="M.5.5h11v4H.5z" fill="#fff" /></Svg></WinButton>
          <WinButton $w={27} aria-label="Maximize"><Svg width="12" height="10" $tone="#534a5e"><path d="M.5.5h11v9H.5zM4.500 3.500h3v3h-3z" fill="#fff" fillRule="evenodd" /></Svg></WinButton>
          <WinButton $w={46} aria-label="Close">
            <Svg width="12" height="10" $tone="#534a5e"><path d="M.5.5h3L6 3 8.500.5h3L8 5l3.500 4.500h-3L6 7 3.500 9.500h-3L4 5z" fill="#fff" /></Svg>
          </WinButton>
        </WinButtons>
      </TitleBar>
      <MenuBar>
        {MENUS.map((m) => <MenuItem key={m}>{m}</MenuItem>)}
        <DocControls>
          <IconButton $w={17} aria-label="Minimize drawing"><Svg width="10" height="10"><path d="M0 8h10" strokeWidth="2" stroke="#222" /></Svg></IconButton>
          <IconButton $w={17} aria-label="Restore drawing"><Svg width="12" height="10" $tone="#222"><path d="M.5 3.500h7v6h-7zM4 3V.5h7.500v6H8M4 1.500h7" /></Svg></IconButton>
          <IconButton $w={17} aria-label="Close drawing"><Svg width="9" height="8"><path d="M1 0l7 8M8 0L1 8" strokeWidth="2" stroke="#222" /></Svg></IconButton>
        </DocControls>
      </MenuBar>
      <TabStrip>
        <DocTab $w={135}>
          <Svg width="135" height="23" $tone="#c3c3c3"><path d="M0 22.500c7 0 7-3 9-10C11 4 12 .5 17 .5h105c6 0 7 4 8 9 1 6 1 13 5 13" fill="#a2a2a2" /></Svg>
          <span>rumahku*</span>
        </DocTab>
        <DocTab $w={138} $active>
          <Svg width="138" height="23" $tone="#d8d8d8"><path d="M0 22.500c7 0 7-3 9-10C11 4 12 .5 17 .5h102c6 0 7 4 8 9 2 8 3 13 11 13" fill="#bababa" /></Svg>
          <span>Drawing2*</span>
          <Svg width="8" height="8" $tone="#777"><path d="M1 1l6 6M7 1L1 7" strokeWidth="2" /></Svg>
        </DocTab>
        <IconButton $w={46} $h={24} aria-label="New tab">
          <Svg width="22" height="16" $tone="#5f5f5f"><path d="M.5.5h14c5 0 7 4 7 15H9C3 15 2 8 .5.5z" fill="#868686" /><path d="M11 4v8M7 8h8" strokeWidth="3" stroke="#a9a9a9" /></Svg>
        </IconButton>
      </TabStrip>
    </Top>
  );
}

function Toolbars() {
  return (
    <Dock>
      <DockRow>
        <Bar>
          <Grip />
          <Tools names="new open save | print preview publish globe | cut copy paste match blockedit |" />
          <IconButton aria-label="Undo"><Icon name="undo" tone="#999" /></IconButton>
          <IconButton $w={12} aria-label="Undo list"><Caret color="#999" w={6} /></IconButton>
          <IconButton aria-label="Redo"><Icon name="redo" tone="#999" /></IconButton>
          <IconButton $w={13} aria-label="Redo list"><Caret color="#999" w={6} /></IconButton>
          <Tools names="| hand zoomrt zoomwin zoomprev | props center palettes sheet markup calc | help" />
        </Bar>
        <Bar>
          <Grip />
          <Tools names="textstyle" />
          <Combo label="Text style" value="Standard" w={119} pad={18} />
          <Divider $w={7} />
          <Tools names="dimstyle" />
          <Combo label="Dimension style" value="ISO-25" w={119} pad={18} />
          <Divider $w={7} />
          <Tools names="tablestyle" />
          <Combo label="Table style" value="Standard" w={119} />
          <Divider $w={7} />
          <Tools names="leaderstyle" />
          <Combo label="Multileader style" value="Standard" w={119} pad={18} />
        </Bar>
      </DockRow>
      <DockRow>
        <Bar>
          <Grip />
          <Combo label="Workspaces" value="AutoCAD Classic" w={174} pad={8} />
          <Tools names="gear wssave" />
        </Bar>
        <Bar>
          <Grip />
          <Tools names="layerprops" />
          <Combo label="Layer" value="0" w={300}>
            <Icon name="bulb" /><Icon name="sun" size={14} /><Icon name="freeze" /><Icon name="lock" /><Swatch />
          </Combo>
          <Tools names="layercur layerprev layerstate" />
        </Bar>
        <Bar>
          <Grip />
          <Combo label="Color" value="ByLayer" w={149} small><Swatch /></Combo>
          <Divider />
          <Combo label="Linetype" value="ByLayer" w={160} small><Stroke $w={60} /></Combo>
          <Divider />
          <Combo label="Lineweight" value="ByLayer" w={126} small><Stroke $w={35} /></Combo>
          <Divider />
          <Combo label="Plot style" value="ByColor" w={119} pad={8} small />
        </Bar>
      </DockRow>
    </Dock>
  );
}

function Drawing() {
  return (
    <Canvas>
      <Scene aria-label="Drawing">
        <g shapeRendering="crispEdges">
          <path d="M367 241L690 350" />
          <line x1="717.5" y1="0" x2="717.5" y2="100%" />
          <line x1="0" y1="286.5" x2="100%" y2="286.5" />
          <path d="M690.500 345v11M685 350.500h11" stroke="#3a9a3a" />
        </g>
        <path d="M691 349l21-62" stroke="#aaa" />
        <path d="M708 280l9 9M717 280l-9 9" />
      </Scene>
      <ViewLabel>[−][Top][2D Wireframe]</ViewLabel>
      <FloatBar>
        <Grip />
        <Tools names="box3d sph sphadd sphsub sphcut | solid solidx" />
        <FloatClose aria-label="Close toolbar"><Svg width="5" height="7"><path d="M0 0l5 7M5 0L0 7" strokeWidth="2" stroke="#fff" /></Svg></FloatClose>
      </FloatBar>
      <Tip role="tooltip">Perpendicular: 102.7650 &lt; 71°</Tip>
      <Compass>
        <CompassFace width="140" height="144" aria-label="View cube">
          <circle cx="70" cy="72" r="54" fill="none" stroke="#282828" strokeWidth="13" />
          <rect x="44.500" y="46.500" width="51" height="51" fill="#a3a3a3" stroke="#6e6e6e" />
          <rect x="54" y="56" width="32" height="32" fill="#9799a0" />
          <g fill="#adadad">
            <text x="70" y="24">N</text>
            <text x="70" y="136">S</text>
            <text x="14" y="80">W</text>
            <text x="126" y="80">E</text>
          </g>
          <text x="70" y="76" fontSize="12" fill="#45454a">TOP</text>
        </CompassFace>
        <Wcs>WCS<Svg width="9" height="6" $tone="#a9a9b8"><path d="M.5.5h8l-4 4z" /></Svg></Wcs>
      </Compass>
      <Ucs width="76" height="74" aria-label="UCS icon">
        <path d="M5.500 4v49.500H55M1.500 49.500h9v9h-9z" transform="translate(0 12)" shapeRendering="crispEdges" />
        <path d="M7.500 0l6 6.500 6-6.500M13.500 6.500v6M60 52l13 13M73 52L60 65" />
      </Ucs>
    </Canvas>
  );
}

function SheetTabs() {
  return (
    <SheetRow>
      <NavButton aria-label="First"><Svg width="8" height="9"><path d="M.5 0v9" stroke="#555" /><path d="M8 0v9L2 4.500z" fill="#555" stroke="none" /></Svg></NavButton>
      <NavButton aria-label="Previous"><Tri d="M7 0v8L2 4z" color="#555" /></NavButton>
      <NavButton aria-label="Next"><Tri d="M1 0v8l5-4z" color="#555" /></NavButton>
      <NavButton aria-label="Last"><Svg width="8" height="9"><path d="M7.500 0v9" stroke="#555" /><path d="M0 0v9l6-4.500z" fill="#555" stroke="none" /></Svg></NavButton>
      <SheetTab $w={54} $active>
        <Svg width="54" height="15"><path d="M0 0h54l-6 15H6z" fill="#000" stroke="none" /></Svg><span>Model</span>
      </SheetTab>
      <SheetTab $w={61}>
        <Svg width="61" height="15" $tone="#333"><path d="M6.500 0L.5 15M60.500 0l-6 15" /></Svg><span>Layout1</span>
      </SheetTab>
      <SheetTab $w={62}>
        <Svg width="62" height="15" $tone="#333"><path d="M5.500 0L0 15M60.500 0l-6 15" /></Svg><span>Layout2</span>
      </SheetTab>
      <HScroll>
        <Splitter />
        <Tri d="M5 0v8L1 4z" size={7} />
        <Thumb />
        <Tri d="M3 0v8l4-4z" size={7} />
      </HScroll>
    </SheetRow>
  );
}

function CommandLine() {
  return (
    <Command>
      <CommandSide>
        <CommandDots />
        <Svg width="10" height="10"><path d="M1 1l8 8M9 1L1 9" strokeWidth="2" stroke="#fff" /></Svg>
        <Icon name="wrench" />
      </CommandSide>
      <CommandBody>
        <p>Specify first point:</p>
        <p>Specify next point or [Undo]:</p>
        <Prompt>
          <Icon name="line" />
          <Caret color="#888" w={6} />
          <b>LINE</b>Specify next point or [<Keyword><span>U</span>ndo</Keyword>]:
          <input aria-label="Command" />
        </Prompt>
      </CommandBody>
    </Command>
  );
}

function StatusBar() {
  return (
    <Status>
      <Coords>1454.9372, 1280.8222, 0.0000</Coords>
      {TOGGLES.map((t) => <Toggle key={t} $on={ACTIVE.includes(t)} aria-label={t}><Icon name={t} /></Toggle>)}
      <StatusGap $w={6} $pushed />
      <Toggle $w={44}>MODEL</Toggle>
      <Toggle aria-label="Model space"><Icon name="modelspace" /></Toggle>
      <Toggle aria-label="Layouts"><Icon name="layouts" /></Toggle>
      <StatusGap $w={12} />
      <Toggle $w={51}><Icon name="anno" />1:1<Caret color="#111" w={7} /></Toggle>
      <Toggle aria-label="Annotation visibility"><Icon name="annovis" /></Toggle>
      <Toggle aria-label="Auto scale"><Icon name="annoauto" /></Toggle>
      <StatusGap $w={5} />
      <Toggle $w={23} aria-label="Workspace switching"><Icon name="gear" /></Toggle>
      <Toggle aria-label="Lock toolbars"><Icon name="padlock" /></Toggle>
      <Toggle $w={23} aria-label="Hardware acceleration"><Icon name="hardware" /></Toggle>
      <StatusGap $w={5} />
      <Toggle $w={25} aria-label="Isolate objects"><Icon name="bulb" /></Toggle>
      <StatusGap $w={6} />
      <Toggle $w={12} aria-label="Status bar menu"><Caret color="#000" w={5} /></Toggle>
      <Toggle aria-label="Clean screen"><Icon name="clean" /></Toggle>
      <SizeGrip>
        <Svg width="12" height="12"><path d="M8 2h3M4 6h7M0 10h11" strokeWidth="3" strokeDasharray="3 1" stroke="#9a9ca0" /></Svg>
      </SizeGrip>
    </Status>
  );
}

export default function App() {
  return (
    <Desktop>
      <Global />
      <Window>
        <Header />
        <Toolbars />
        <Workspace>
          <LeftDock>
            <SideBar><Grip $across /><Tools names={DRAW} /></SideBar>
          </LeftDock>
          <Viewport>
            <Drawing />
            <VScroll>
              <ScrollTop><Tri d="M0 6l4-4 4 4z" size={7} /><Thumb /></ScrollTop>
              <Tri d="M0 2l4 4 4-4z" size={7} />
            </VScroll>
            <SheetTabs />
          </Viewport>
          <RightDock>
            <SideBar><Grip $across /><Tools names={MODIFY} /></SideBar>
            <SideBar>
              <Grip $across />
              <Tools names="front back above under" />
              <SideRule />
              <Tools names="abc hatchback" />
            </SideBar>
          </RightDock>
        </Workspace>
        <CommandLine />
        <StatusBar />
      </Window>
    </Desktop>
  );
}
